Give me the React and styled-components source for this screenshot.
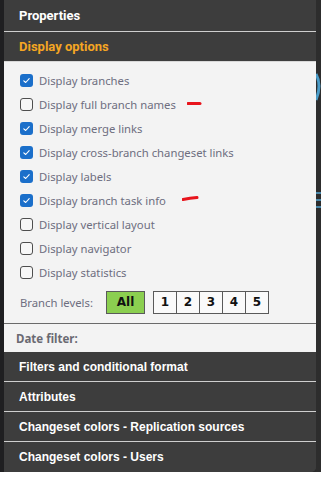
import React from "react";
import styled, { createGlobalStyle } from "styled-components";

const Global = createGlobalStyle`
  html, body { margin: 0; padding: 0; background: #ffffff; }
  body { width: 321px; height: 479px; overflow: hidden; }
`;

const Frame = styled.div`
  display: flex;
  width: 321px;
  height: 472px;
  background: #2b2b2b;
`;

const LeftStrip = styled.div`
  width: 4px;
  background: #1f1f21;
`;

const RightStrip = styled.div`
  flex: 1;
  background: #2d2d2d;
  position: relative;
  overflow: hidden;
`;

const Panel = styled.div`
  width: 312px;
  display: flex;
  flex-direction: column;
  background: #3d3d3d;
  border-bottom-right-radius: 5px;
  overflow: hidden;
`;

const Header = styled.div`
  height: ${(p) => p.$h || 30}px;
  box-sizing: border-box;
  display: flex;
  align-items: center;
  padding-left: 15px;
  padding-bottom: ${(p) => (p.$modern ? 1 : 0)}px;
  background: #3d3d3d;
  color: ${(p) => (p.$active ? "#f5a623" : "#ffffff")};
  font-family: ${(p) => (p.$modern ? "Roboto, 'Noto Sans', sans-serif" : "'Liberation Sans', Arial, sans-serif")};
  font-weight: bold;
  font-size: ${(p) => (p.$modern ? "13px" : "12px")};
  border-bottom: 1px solid ${(p) => p.$line || "#cfcfcf"};
  &:last-child { border-bottom: none; }
`;

const Content = styled.div`
  background: #f3f3f3;
  padding: 6px 0 9px 16px;
  display: flex;
  flex-direction: column;
  border-bottom: 1px solid #6a6a6a;
`;

const Row = styled.label`
  height: 24px;
  display: flex;
  align-items: center;
  gap: 6px;
  font-family: "Noto Sans", "Open Sans", sans-serif;
  font-size: 11.3px;
  color: #6e6e80;
  position: relative;
`;

const Box = styled.span`
  width: 13px;
  height: 13px;
  box-sizing: border-box;
  border-radius: 3px;
  display: inline-flex;
  align-items: center;
  justify-content: center;
  background: ${(p) => (p.$on ? "#1b6fca" : "#f7f7f7")};
  border: ${(p) => (p.$on ? "none" : "1px solid #4e4e4e")};
  flex: none;
`;

const Mark = styled.svg`
  position: absolute;
  top: ${(p) => p.$top}px;
  left: ${(p) => p.$left}px;
`;

const LevelRow = styled.div`
  height: 24px;
  margin-top: 6px;
  display: flex;
  align-items: center;
  font-family: "Noto Sans", "Open Sans", sans-serif;
  font-size: 11.3px;
  color: #6e6e80;
`;

const LevelLabel = styled.span`
  width: 86px;
  flex: none;
`;

const AllButton = styled.span`
  width: 39px;
  height: 23px;
  box-sizing: border-box;
  background: #8bcf50;
  border: 1px solid #5a5a5a;
  display: flex;
  align-items: center;
  justify-content: center;
  font-family: "DejaVu Sans", Verdana, sans-serif;
  font-weight: bold;
  font-size: 12px;
  color: #111;
  margin-right: 8px;
`;

const NumGroup = styled.div`
  display: flex;
`;

const NumButton = styled.span`
  width: 24px;
  height: 23px;
  box-sizing: border-box;
  background: #fafafa;
  border: 1px solid #5a5a5a;
  margin-left: ${(p) => (p.$first ? 0 : -1)}px;
  display: flex;
  align-items: center;
  justify-content: center;
  font-family: "DejaVu Sans", Verdana, sans-serif;
  font-weight: bold;
  font-size: 12px;
  color: #111;
`;

const DateFilter = styled.div`
  height: 28px;
  background: #f3f3f3;
  display: flex;
  align-items: center;
  padding-left: 12px;
  font-family: "Noto Sans", "Open Sans", sans-serif;
  font-weight: bold;
  font-size: 11.5px;
  color: #6a6a72;
`;

const Check = () => (
  <svg width="9" height="9" viewBox="0 0 9 9">
    <path d="M1.8 4.8 L3.7 6.5 L7.2 2.6" fill="none" stroke="#ffffff" strokeWidth="1.1" strokeLinecap="round" strokeLinejoin="round" />
  </svg>
);

const options = [
  { label: "Display branches", on: true },
  { label: "Display full branch names", on: false, mark: { left: 167, top: 10, d: "M1 1.5 L13 1.5" } },
  { label: "Display merge links", on: true },
  { label: "Display cross-branch changeset links", on: true },
  { label: "Display labels", on: true },
  { label: "Display branch task info", on: true, mark: { left: 162, top: 8, d: "M1 3.5 L8 2.3 L15 1.6" } },
  { label: "Display vertical layout", on: false },
  { label: "Display navigator", on: false },
  { label: "Display statistics", on: false },
];

const sections = [
  "Filters and conditional format",
  "Attributes",
  "Changeset colors - Replication sources",
  "Changeset colors - Users",
];

export default function App() {
  return (
    <>
      <Global />
      <Frame>
        <LeftStrip />
        <Panel>
          <Header $modern $h={32}>Properties</Header>
          <Header $modern $active $h={30} $line="#d8d8d8">Display options</Header>
          <Content>
            {options.map((o) => (
              <Row key={o.label}>
                <Box $on={o.on}>{o.on && <Check />}</Box>
                {o.label}
                {o.mark && (
                  <Mark $left={o.mark.left} $top={o.mark.top} width="17" height="6" viewBox="0 0 17 6">
                    <path d={o.mark.d} stroke="#e8141c" strokeWidth="3" strokeLinecap="round" fill="none" />
                  </Mark>
                )}
              </Row>
            ))}
            <LevelRow>
              <LevelLabel>Branch levels:</LevelLabel>
              <AllButton>All</AllButton>
              <NumGroup>
                {[1, 2, 3, 4, 5].map((n) => (
                  <NumButton key={n} $first={n === 1}>{n}</NumButton>
                ))}
              </NumGroup>
            </LevelRow>
          </Content>
          <DateFilter>Date filter:</DateFilter>
          {sections.map((s) => (
            <Header key={s}>{s}</Header>
          ))}
        </Panel>
        <RightStrip>
          <svg width="5" height="472" viewBox="0 0 5 472" style={{ position: "absolute", left: 0, top: 0 }}>
            <path d="M0 74 Q6 85 0 100" stroke="#4a9cc8" strokeWidth="3" fill="none" />
            <rect x="0" y="192" width="5" height="2" fill="#4a88aa" />
            <rect x="0" y="199" width="5" height="2" fill="#4a88aa" />
            <rect x="0" y="206" width="5" height="2" fill="#4a88aa" />
          </svg>
        </RightStrip>
      </Frame>
    </>
  );
}
